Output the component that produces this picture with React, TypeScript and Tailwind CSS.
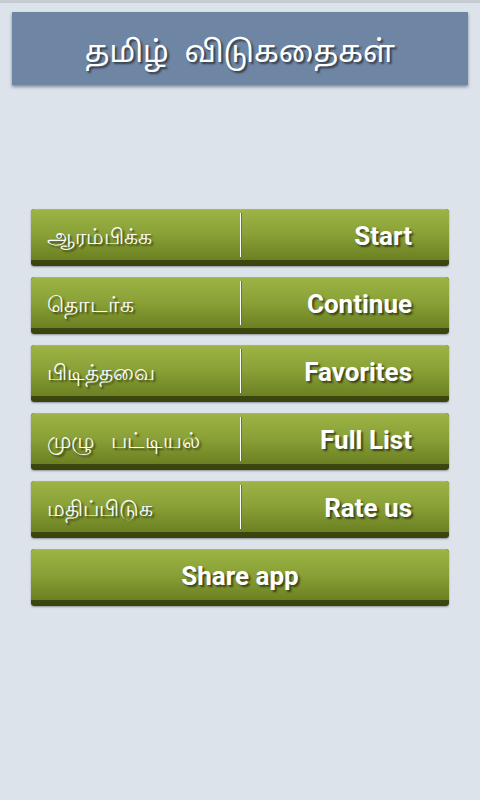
const rows = [
  { ta: "ஆரம்பிக்க", en: "Start" },
  { ta: "தொடர்க", en: "Continue" },
  { ta: "பிடித்தவை", en: "Favorites" },
  { ta: "முழு\u00a0\u00a0\u00a0பட்டியல்", en: "Full List" },
  { ta: "மதிப்பிடுக", en: "Rate us" },
];

const shadow = "[text-shadow:2px_2px_2px_rgba(0,0,0,0.55)]";

function GreenButton({ children }: { children: React.ReactNode }) {
  return (
    <div className="h-[57px] rounded-[3px] bg-gradient-to-b from-[#4d5c16] to-[#39430f] shadow-[0_1px_2px_rgba(0,0,0,0.35)] overflow-hidden">
      <div className="h-[51px] rounded-t-[3px] border-t border-[#a9bd52] bg-gradient-to-b from-[#9db345] via-[#88a036] to-[#6c8022] flex items-center relative">
        {children}
      </div>
    </div>
  );
}

export default function App() {
  return (
    <div className="w-[480px] h-[800px] bg-[#dde3ea] border-t-[3px] border-[#c6cbd2] font-['Roboto',sans-serif]">
      <div className="pt-[9px] px-3">
        <div className="h-[73px] bg-[#6e85a3] shadow-[0_2px_3px_rgba(40,55,80,0.5)] flex items-center justify-center pt-3">
          <h1 className={`text-white text-[30px] font-['Noto_Sans_Tamil','Noto_Sans',sans-serif] ${shadow}`}>
            தமிழ்&nbsp;&nbsp;விடுகதைகள்
          </h1>
        </div>
      </div>

      <div className="mt-[124px] px-[31px] flex flex-col gap-[11px]">
        {rows.map((r) => (
          <GreenButton key={r.en}>
            <span className={`flex-1 pl-4 pt-[3px] text-white text-[22px] ${shadow}`}>{r.ta}</span>
            <div className="absolute left-[209px] top-[3px] h-[44px] w-[2px] flex">
              <div className="w-px bg-white" />
              <div className="w-px bg-[#4a6fb0]" />
            </div>
            <span className={`flex-1 text-right pr-[37px] pt-[3px] text-white text-[26px] font-bold ${shadow}`}>
              {r.en}
            </span>
          </GreenButton>
        ))}
        <GreenButton>
          <span className={`flex-1 text-center pt-[3px] text-white text-[26px] font-bold ${shadow}`}>Share app</span>
        </GreenButton>
      </div>
    </div>
  );
}
